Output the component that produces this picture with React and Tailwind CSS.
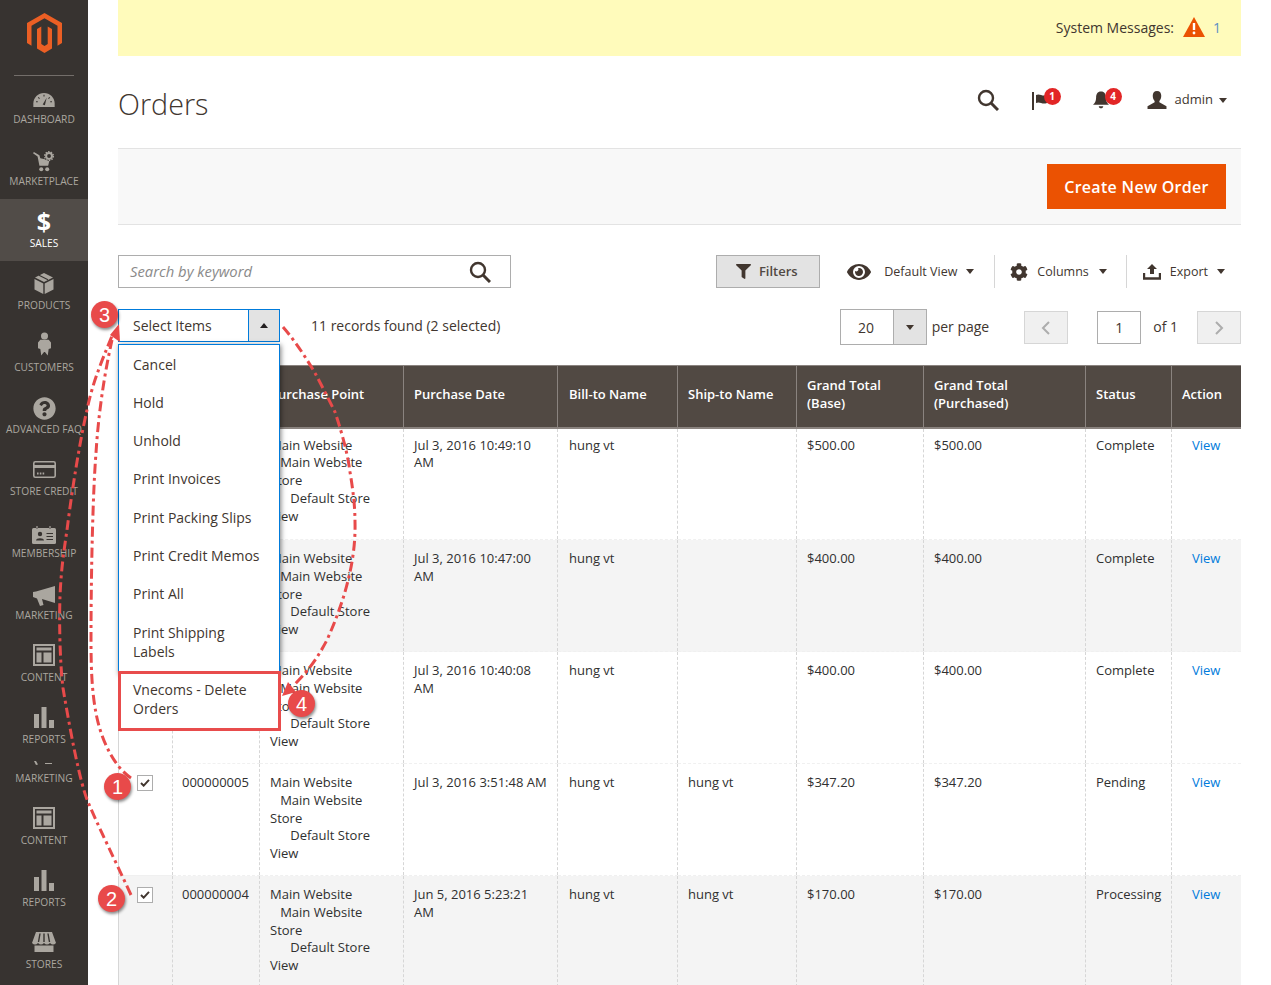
import { FaQuestionCircle, FaCog, FaEye, FaFilter } from 'react-icons/fa'

const iconFill = '#aaa69f'

const GaugeIcon = () => (
  <svg className="mt-[6px]" width="22" height="16" viewBox="0 0 24 18">
    <path d="M0 17V13A12 12 0 0 1 24 13V17Z" fill={iconFill} />
    <path d="M3 11h2M5.5 6l1.5 1.4M12 3v2M18.5 6L17 7.4M21 11h-2" stroke="#373330" strokeWidth="1.2" />
    <path d="M10.5 14L15 6.5L13 15Z" fill="#373330" />
  </svg>
)

const CartIcon = () => (
  <svg className="mt-[6px]" width="22" height="22" viewBox="0 0 24 24">
    <path d="M0 2.5L1 1L7 4.5L8 8L18 10L16.5 16H7L5 6Z" fill={iconFill} />
    <circle cx="9" cy="20" r="2.2" fill={iconFill} />
    <circle cx="15.5" cy="20" r="2.2" fill={iconFill} />
    <circle cx="17.5" cy="5.5" r="5.5" fill="#373330" />
    <circle cx="17.5" cy="5.5" r="3.2" fill="none" stroke={iconFill} strokeWidth="2.2" />
    <circle cx="17.5" cy="5.5" r="4.8" fill="none" stroke={iconFill} strokeWidth="1.4" strokeDasharray="1.6 1.4" />
  </svg>
)

const BoxIcon = () => (
  <svg width="20" height="21" viewBox="0 0 20 21">
    <path d="M10 0L19 4.5L10 9L1 4.5Z" fill={iconFill} />
    <path d="M0.5 6L9.3 10.5V21L0.5 16.5Z" fill={iconFill} />
    <path d="M19.5 6L10.7 10.5V21L19.5 16.5Z" fill={iconFill} />
    <path d="M5 2.3L14 6.8" stroke="#373330" strokeWidth="1.2" />
  </svg>
)

const PersonIcon = () => (
  <svg className="mt-[-2px]" width="13" height="24" viewBox="0 0 14 25">
    <circle cx="7" cy="3.8" r="3.8" fill={iconFill} />
    <path d="M2.5 8H11.5L14 11V17L11.5 18L10.5 25L7.5 21H6.5L3.5 25L2.5 18L0 17V11Z" fill={iconFill} />
  </svg>
)

const CardIcon = () => (
  <svg width="23" height="17" viewBox="0 0 23 17">
    <rect x="0.8" y="0.8" width="21.4" height="15.4" rx="1.5" fill="none" stroke={iconFill} strokeWidth="1.6" />
    <rect x="1" y="4" width="21" height="3" fill={iconFill} />
    <path d="M4 12.5h1.6M6.8 12.5h1.6M9.6 12.5h1.6" stroke={iconFill} strokeWidth="1.8" />
  </svg>
)

const MemberIcon = () => (
  <svg className="mt-[8px]" width="24" height="18" viewBox="0 0 24 18">
    <rect x="0" y="2" width="24" height="16" rx="1.5" fill={iconFill} />
    <path d="M5 0v4M18 0v4" stroke={iconFill} strokeWidth="2" />
    <path d="M5 0v3M18 0v3" stroke="#373330" strokeWidth="0.8" />
    <circle cx="8" cy="8" r="2.2" fill="#373330" />
    <path d="M4 14.5C4 11.5 12 11.5 12 14.5Z" fill="#373330" />
    <path d="M14.5 7.5H21M14.5 10.5H21M14.5 13.5H21" stroke="#373330" strokeWidth="1.2" />
  </svg>
)

const MegaphoneIcon = () => (
  <svg className="mt-[6px]" width="22" height="20" viewBox="0 0 22 20">
    <path d="M0 6L3 5.5L22 0V17L9 13L10.5 19L7 20L4 12.5L0 11Z" fill={iconFill} />
  </svg>
)

const ContentIcon = () => (
  <svg width="22" height="22" viewBox="0 0 22 22">
    <rect x="1" y="1" width="20" height="20" fill="none" stroke={iconFill} strokeWidth="2" />
    <rect x="3.5" y="3.5" width="15" height="3" fill={iconFill} />
    <rect x="3.5" y="8.5" width="5" height="10" fill={iconFill} />
    <rect x="10.5" y="8.5" width="8" height="10" fill={iconFill} />
  </svg>
)

const ReportsIcon = () => (
  <svg width="20" height="21" viewBox="0 0 20 21">
    <rect x="0" y="7" width="5" height="14" fill={iconFill} />
    <rect x="7.5" y="0" width="5" height="21" fill={iconFill} />
    <rect x="15" y="13" width="5" height="8" fill={iconFill} />
  </svg>
)

const StoreIcon = () => (
  <svg width="24" height="20" viewBox="0 0 24 20">
    <path d="M4 0H20L24 11C22 13 20 13 18 11C16 13 14 13 12 11C10 13 8 13 6 11C4 13 2 13 0 11Z" fill={iconFill} />
    <path d="M8 1.5L6.5 10M12 1.5V10M16 1.5L17.5 10" stroke="#373330" strokeWidth="1.4" />
    <path d="M2.5 13.5H21.5V20H2.5Z" fill={iconFill} />
  </svg>
)

const ClippedMegaphone = () => (
  <svg width="24" height="4" viewBox="0 0 24 4">
    <path d="M2 0L4 0L6 3.5L4 4Z M13 2H20V3H13Z" fill={iconFill} />
  </svg>
)

const navItems = [
  { label: 'Dashboard', icon: <GaugeIcon /> },
  { label: 'Marketplace', icon: <CartIcon /> },
  { label: 'Sales', active: true, icon: <span className="text-[25px] font-bold text-white leading-none">$</span> },
  { label: 'Products', icon: <BoxIcon /> },
  { label: 'Customers', icon: <PersonIcon /> },
  { label: 'Advanced FAQ', icon: <FaQuestionCircle className="w-[23px] h-[23px] text-[#aaa69f] mt-[2px]" /> },
  { label: 'Store Credit', icon: <CardIcon /> },
  { label: 'Membership', icon: <MemberIcon /> },
  { label: 'Marketing', icon: <MegaphoneIcon /> },
  { label: 'Content', icon: <ContentIcon /> },
  { label: 'Reports', icon: <ReportsIcon /> },
  { label: 'Marketing', clipped: true, icon: <ClippedMegaphone /> },
  { label: 'Content', icon: <ContentIcon /> },
  { label: 'Reports', icon: <ReportsIcon /> },
  { label: 'Stores', icon: <StoreIcon /> },
]

const Sidebar = () => (
  <div className="w-[88px] shrink-0 bg-[#373330] flex flex-col">
    <div className="h-[76px] mb-[-1px] mx-[14px] border-b border-[#736e6a] flex justify-center pt-[13px]">
      <svg width="35" height="40" viewBox="0 0 35 40">
        <path d="M17.5 0L35 10V30L30.5 32.7V12.8L17.5 5.3L4.5 12.8V32.7L0 30V10Z" fill="#eb5f24" />
        <path d="M10 16L14.3 13.6V31L17.5 33L20.7 31V13.6L25 16V35.5L17.5 40L10 35.5Z" fill="#eb5f24" />
      </svg>
    </div>
    {navItems.map((item, idx) => {
      if (item.clipped) {
        return (
          <div key={idx} className="h-[39px] flex flex-col items-center justify-end pb-[10px]">
            {item.icon}
            <div className="h-[16px] mt-[5px] leading-[16px] text-[10.2px] uppercase text-[#aaa69f]">{item.label}</div>
          </div>
        )
      }
      return (
        <div key={idx} className={`h-[62px] pt-[8px] flex flex-col items-center ${item.active ? 'bg-[#514c48]' : ''}`}>
          <div className="h-[28px] flex items-center justify-center">{item.icon}</div>
          <div className={`h-[16px] leading-[16px] whitespace-nowrap text-[10.2px] uppercase ${item.active ? 'text-white' : 'text-[#aaa69f]'}`}>
            {item.label}
          </div>
        </div>
      )
    })}
  </div>
)

const Caret = ({ up, className = '' }) => (
  <span
    className={`inline-block w-0 h-0 border-x-[4px] border-x-transparent ${up ? 'border-b-[5px] border-b-[#231f20]' : 'border-t-[5px] border-t-[#41362f]'} ${className}`}
  />
)

const Badge = ({ n }) => (
  <span className="absolute -top-[2px] left-[12px] w-[17px] h-[17px] rounded-full bg-[#e22626] text-white text-[10px] font-bold flex items-center justify-center">
    {n}
  </span>
)

const HeaderBar = () => (
  <div className="h-[92px] flex items-center justify-between pr-[14px]">
    <h1 className="text-[28.7px] font-light text-[#41362f] mt-[4px]">Orders</h1>
    <div className="flex items-center mt-[-4px]">
      <svg width="22" height="22" viewBox="0 0 22 22" fill="none" stroke="#41362f" strokeWidth="2.4">
        <circle cx="9" cy="9" r="7" />
        <path d="M14 14L21 21" strokeWidth="3" />
      </svg>
      <div className="relative ml-[33px] w-[20px] h-[20px]">
        <svg className="mt-[2px]" width="16" height="18" viewBox="0 0 16 18">
          <path d="M1 0V18" stroke="#41362f" strokeWidth="2" />
          <path d="M4 3C8 1 10 5 15 3V11C10 13 8 9 4 11Z" fill="#41362f" />
        </svg>
        <Badge n="1" />
      </div>
      <div className="relative ml-[41px] w-[20px] h-[20px]">
        <svg width="16" height="19" viewBox="0 0 18 20">
          <path d="M9 1C13 1 14.5 4 14.5 8C14.5 12 16 14 18 16H0C2 14 3.5 12 3.5 8C3.5 4 5 1 9 1Z" fill="#41362f" />
          <path d="M6.5 17.5H11.5C11.5 20.5 6.5 20.5 6.5 17.5Z" fill="#41362f" />
        </svg>
        <Badge n="4" />
      </div>
      <svg className="ml-[34px]" width="20" height="18" viewBox="0 0 20 19">
        <path d="M10 0C13 0 14.5 2.2 14.5 5C14.5 7.5 13.5 9.5 12.5 10.5V12L20 16V19H0V16L7.5 12V10.5C6.5 9.5 5.5 7.5 5.5 5C5.5 2.2 7 0 10 0Z" fill="#41362f" />
      </svg>
      <span className="ml-[8px] text-[13px] text-[#41362f]">admin</span>
      <Caret className="ml-[6px]" />
    </div>
  </div>
)

const FilterRow = () => (
  <div className="flex items-center justify-between pr-[16px] mt-[30px] h-[33px]">
    <div className="w-[393px] h-[33px] border border-[#adadad] flex items-center justify-between pl-[11px] pr-[19px]">
      <span className="text-[14.8px] italic text-[#8a8a8a]">Search by keyword</span>
      <svg width="22" height="22" viewBox="0 0 22 22" fill="none" stroke="#41362f" strokeWidth="2.4">
        <circle cx="9" cy="9" r="7" />
        <path d="M14 14L21 21" strokeWidth="3" />
      </svg>
    </div>
    <div className="flex items-center text-[12.5px] text-[#41362f]">
      <div className="w-[104px] h-[33px] pr-[4px] bg-[#e3e3e3] border border-[#adadad] flex items-center justify-center gap-[7px] text-[13px] font-semibold text-[#514943]">
        <FaFilter className="w-[17px] h-[15px] text-[#41362f]" />
        <span className="mt-[1px]">Filters</span>
      </div>
      <FaEye className="ml-[27px] w-[24px] h-[24px] text-[#41362f]" />
      <span className="ml-[13px] mt-[1px]">Default View</span>
      <Caret className="ml-[9px]" />
      <div className="ml-[20px] w-px h-[33px] bg-[#d6d6d6]" />
      <FaCog className="ml-[15px] w-[18px] h-[18px] text-[#41362f]" />
      <span className="ml-[9px] mt-[1px]">Columns</span>
      <Caret className="ml-[10px]" />
      <div className="ml-[19px] w-px h-[33px] bg-[#d6d6d6]" />
      <svg className="ml-[16px]" width="18" height="16" viewBox="0 0 18 16">
        <path d="M9 0L14 5H11V10H7V5H4Z" fill="#41362f" />
        <path d="M1 9V14.5H17V9" stroke="#41362f" strokeWidth="2.4" fill="none" />
      </svg>
      <span className="ml-[9px] mt-[1px]">Export</span>
      <Caret className="ml-[9px]" />
    </div>
  </div>
)

const actions = [
  'Cancel',
  'Hold',
  'Unhold',
  'Print Invoices',
  'Print Packing Slips',
  'Print Credit Memos',
  'Print All',
  'Print Shipping Labels',
]

const PagerRow = () => (
  <div className="relative flex items-start justify-between mt-[21px] h-[56px] text-[14px] text-[#41362f]">
    <div className="flex items-center">
      <div className="w-[162px] h-[33px] border border-[#007bdb] flex">
        <div className="flex-1 flex items-center pl-[14px]">Select Items</div>
        <div className="w-[31px] border-l border-[#007bdb] bg-[#e3e3e3] flex items-center justify-center">
          <Caret up />
        </div>
      </div>
      <span className="ml-[31px]">11 records found (2 selected)</span>
    </div>
    <div className="flex items-start">
      <div className="w-[87px] h-[36px] border border-[#adadad] flex">
        <div className="flex-1 flex items-center justify-center pr-px">20</div>
        <div className="w-[33px] border-l border-[#adadad] bg-[#e3e3e3] flex items-center justify-center">
          <Caret />
        </div>
      </div>
      <span className="ml-[5px] mt-[7px]">per page</span>
      <div className="ml-[35px] mt-[2px] w-[44px] h-[33px] bg-[#f0f0f0] border border-[#d6d6d6] flex items-center justify-center">
        <svg width="10" height="14" viewBox="0 0 10 14" fill="none" stroke="#adadad" strokeWidth="2"><path d="M8 1L2 7L8 13" /></svg>
      </div>
      <div className="ml-[29px] mt-[2px] w-[44px] h-[33px] border border-[#adadad] flex items-center justify-center">1</div>
      <span className="ml-[12px] mt-[7px]">of 1</span>
      <div className="ml-[19px] mt-[2px] w-[44px] h-[33px] bg-[#f0f0f0] border border-[#d6d6d6] flex items-center justify-center">
        <svg width="10" height="14" viewBox="0 0 10 14" fill="none" stroke="#adadad" strokeWidth="2"><path d="M2 1L8 7L2 13" /></svg>
      </div>
    </div>

    {/* mass actions menu, open */}
    <div className="absolute left-0 top-[35px] z-10 w-[162px] h-[330px] bg-white border border-[#007bdb] shadow-[1px_1px_5px_rgba(0,0,0,0.5)]">
      {actions.map(label => (
        <div key={label} className="px-[14px] py-[9.65px] leading-[19px] text-[#41362f]">{label}</div>
      ))}
    </div>
    <div className="absolute left-0 top-[362px] z-10 w-[163px] h-[60px] bg-white border-[3px] border-[#e84c4c] pl-[12px] pt-[6px] leading-[19px]">
      Vnecoms - Delete Orders
    </div>
  </div>
)

const heads = [
  [''], ['ID'], ['Purchase Point'], ['Purchase Date'], ['Bill-to Name'], ['Ship-to Name'],
  ['Grand Total', '(Base)'], ['Grand Total', '(Purchased)'], ['Status'], ['Action'],
]

const rows = [
  { id: '000000008', date: 'Jul 3, 2016 10:49:10 AM', ship: '', base: '$500.00', paid: '$500.00', status: 'Complete', first: true },
  { id: '000000007', date: 'Jul 3, 2016 10:47:00 AM', ship: '', base: '$400.00', paid: '$400.00', status: 'Complete', shaded: true },
  { id: '000000006', date: 'Jul 3, 2016 10:40:08 AM', ship: '', base: '$400.00', paid: '$400.00', status: 'Complete' },
  { id: '000000005', date: 'Jul 3, 2016 3:51:48 AM', ship: 'hung vt', base: '$347.20', paid: '$347.20', status: 'Pending', checked: true },
  { id: '000000004', date: 'Jun 5, 2016 5:23:21 AM', ship: 'hung vt', base: '$170.00', paid: '$170.00', status: 'Processing', checked: true, shaded: true },
]

const Check = ({ checked }) => (
  <div className="ml-[18px] w-[16px] h-[16px] border border-[#adadad] bg-white flex items-center justify-center">
    {checked && (
      <svg width="10" height="8" viewBox="0 0 11 9" fill="none" stroke="#41362f" strokeWidth="2.2"><path d="M1 4.5L4 7.5L10 1" /></svg>
    )}
  </div>
)

const cellBase = 'align-top leading-[17.8px] border-l border-dashed border-l-[#d6d6d6] border-b border-b-[#f0f0f0]'

const OrdersTable = () => (
  <table className="w-[1122px] table-fixed border-collapse text-[13px] text-[#303030]">
    <colgroup>
      <col className="w-[54px]" />
      <col className="w-[87px]" />
      <col className="w-[144px]" />
      <col className="w-[154px]" />
      <col className="w-[120px]" />
      <col className="w-[119px]" />
      <col className="w-[127px]" />
      <col className="w-[162px]" />
      <col className="w-[86px]" />
      <col className="w-[69px]" />
    </colgroup>
    <thead>
      <tr className="h-[62px] bg-[#514943] text-white text-left">
        {heads.map((lines, i) => (
          <th
            key={i}
            className={`pr-[10px] pb-[4px] font-semibold leading-[18px] border-t border-t-[#8a837f] border-b-[2px] border-b-[#8a837f] ${i === 4 ? 'pl-[11px]' : 'pl-[10px]'} ${i > 1 ? 'border-l border-l-[#8a837f]' : ''}`}
          >
            {lines.map(l => <div key={l}>{l}</div>)}
          </th>
        ))}
      </tr>
    </thead>
    <tbody>
      {rows.map(row => {
        const cell = `${cellBase} ${row.first ? 'pt-[8px]' : 'pt-[10px]'}`
        return (
          <tr key={row.id} className={row.shaded ? 'bg-[#f4f4f4]' : 'bg-white'}>
            <td className="h-[112px] align-top pt-[11px] border-l border-l-[#d6d6d6] border-b border-b-[#f0f0f0]">
              <Check checked={row.checked} />
            </td>
            <td className={`${cell} px-[9px]`}>{row.id}</td>
            <td className={`${cell} px-[10px]`}>
              Main Website<br />
              &nbsp;&nbsp;&nbsp;Main Website Store<br />
              &nbsp;&nbsp;&nbsp;&nbsp;&nbsp;&nbsp;Default Store View
            </td>
            <td className={`${cell} pl-[10px] pr-[9px]`}>{row.date}</td>
            <td className={`${cell} pl-[11px] pr-[10px]`}>hung vt</td>
            <td className={`${cell} px-[10px]`}>{row.ship}</td>
            <td className={`${cell} px-[10px]`}>{row.base}</td>
            <td className={`${cell} px-[10px]`}>{row.paid}</td>
            <td className={`${cell} pl-[10px] pr-[9px]`}>{row.status}</td>
            <td className={`${cell} pl-[20px] text-[#007bdb]`}>View</td>
          </tr>
        )
      })}
    </tbody>
  </table>
)

const StepBadge = ({ n, className }) => (
  <div className={`absolute w-[27px] h-[27px] rounded-full bg-[#e84a4a] text-white text-[20px] flex items-center justify-center shadow-[1px_2px_3px_rgba(0,0,0,0.45)] font-['Liberation_Sans',sans-serif] ${className}`}>
    {n}
  </div>
)

const Annotations = () => (
  <div className="absolute inset-0 z-20 pointer-events-none">
    <svg className="absolute inset-0" width="1271" height="985" fill="none" stroke="#e84a4a" strokeWidth="3" strokeDasharray="10 4 3 4">
      <path d="M131 778C116 768 103 745 97 718C92 695 91 670 91 640C91 570 93 490 96 453C98 420 103 380 112 340" />
      <path d="M131 895C115 860 100 830 88 802C80 783 70 730 63 688C60 665 59 620 60 597C61 570 64 550 67 530C72 490 80 440 87 410C92 385 100 365 112 336" />
      <path d="M283 327C296 342 306 358 315 373C322 386 329 400 335 412C343 436 348 456 350 472C353 490 355 506 355 522C356 560 345 600 327 640C319 655 311 668 295 684" />
    </svg>
    <svg className="absolute inset-0" width="1271" height="985" fill="#e84a4a">
      <path d="M119 324L120 342L110 335Z" />
      <path d="M282 696L288 682L296 692Z" />
    </svg>
    <StepBadge n="3" className="left-[91px] top-[301px]" />
    <StepBadge n="4" className="left-[288px] top-[690px]" />
    <StepBadge n="1" className="left-[104px] top-[773px]" />
    <StepBadge n="2" className="left-[98px] top-[885px]" />
  </div>
)

export default function App() {
  return (
    <div className="relative h-[985px] w-[1271px] overflow-hidden flex bg-white font-['Open_Sans',sans-serif]">
      <Sidebar />
      <div className="flex-1 min-w-0 pl-[30px] pr-[30px]">
        <div className="h-[56px] pb-[2px] bg-[#fffbbb] flex items-center justify-end pr-[20px] text-[14px] text-[#41362f]">
          <span className="mr-[9px]">System Messages:</span>
          <svg width="22" height="20" viewBox="0 0 22 20">
            <path d="M11 0L22 20H0Z" fill="#eb5202" />
            <path d="M11 6V13" stroke="#fff" strokeWidth="2.4" />
            <circle cx="11" cy="16" r="1.4" fill="#fff" />
          </svg>
          <span className="ml-[8px] text-[#5b8fc4]">1</span>
        </div>
        <HeaderBar />
        <div className="h-[77px] bg-[#f8f8f8] border-y border-[#e3e3e3] flex items-center justify-end pr-[15px]">
          <div className="w-[179px] h-[45px] bg-[#eb5202] text-white text-[16px] font-semibold flex items-center justify-center tracking-[0.3px]">
            Create New Order
          </div>
        </div>
        <FilterRow />
        <PagerRow />
        <OrdersTable />
      </div>
      <Annotations />
    </div>
  )
}
